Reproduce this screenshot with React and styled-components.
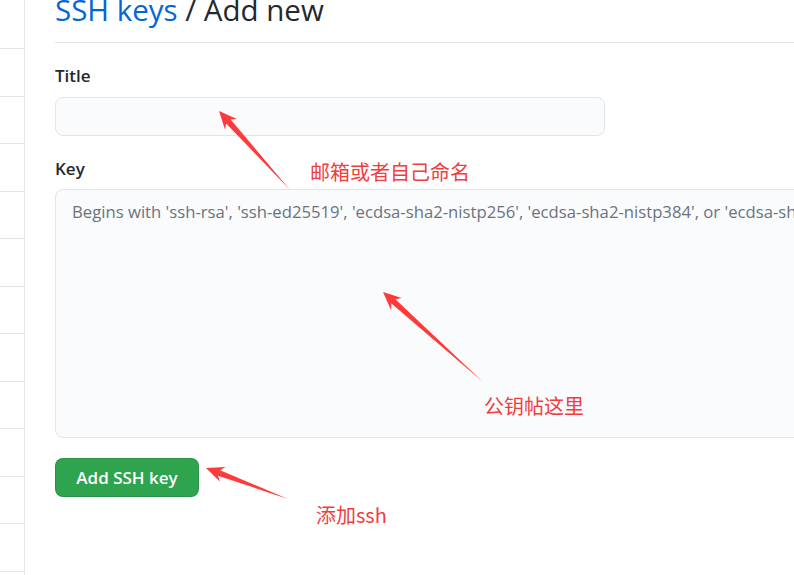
import React from "react"
import styled, { createGlobalStyle } from "styled-components"

const GlobalStyle = createGlobalStyle`
  html, body {
    margin: 0;
    padding: 0;
    background: #fff;
    overflow: hidden;
  }
  body {
    font-family: "Open Sans", "Noto Sans CJK SC", sans-serif;
    color: #24292e;
  }
`

const Page = styled.div`
  position: relative;
  display: flex;
  width: 794px;
  height: 575px;
  overflow: hidden;
`

const Sidebar = styled.ul`
  flex: 0 0 24px;
  margin: 0;
  padding: 1.5px 0 0 0;
  border-right: 1px solid #e1e4e8;
  list-style: none;
`

const SideItem = styled.li`
  height: 46.5px;
  border-bottom: 1px solid #e1e4e8;
`

const Main = styled.main`
  flex: 1;
  padding-left: 30px;
  min-width: 0;
`

const Subhead = styled.div`
  margin-top: -10px;
  padding-bottom: 12px;
  border-bottom: 1px solid #e1e4e8;
`

const Heading = styled.h2`
  margin: 0;
  font-size: 29.5px;
  line-height: 40px;
  font-weight: 400;
  color: #24292e;
  white-space: nowrap;
  a {
    color: #0366d6;
    text-decoration: none;
  }
`

const FormGroup = styled.div`
  margin-top: ${p => p.$top}px;
`

const Label = styled.label`
  display: block;
  font-size: 17px;
  font-weight: 600;
  line-height: 24px;
  margin-bottom: ${p => p.$gap}px;
`

const Input = styled.input`
  display: block;
  box-sizing: border-box;
  width: 550px;
  height: 39px;
  padding: 6px 16px;
  background: #fafbfc;
  border: 1px solid #e1e4e8;
  border-radius: 8px;
  font-family: inherit;
  font-size: 17px;
  outline: none;
`

const TextArea = styled.textarea`
  display: block;
  box-sizing: border-box;
  width: 960px;
  height: 249px;
  padding: 8px 16px;
  background: #fafbfc;
  border: 1px solid #e1e4e8;
  border-radius: 8px;
  font-family: "Open Sans", sans-serif;
  font-size: 16.7px;
  line-height: 27px;
  resize: none;
  outline: none;
  &::placeholder {
    color: #6a737d;
  }
`

const Button = styled.button`
  display: block;
  margin-top: 20px;
  box-sizing: border-box;
  width: 144px;
  height: 39px;
  padding: 0;
  background: #2ea44f;
  border: 1px solid rgba(27, 31, 35, 0.15);
  border-radius: 8px;
  color: #fff;
  font-family: "Open Sans", sans-serif;
  font-size: 17px;
  font-weight: 600;
  cursor: pointer;
`

const Overlay = styled.svg`
  position: absolute;
  left: 0;
  top: 0;
  pointer-events: none;
`

const Note = styled.span`
  position: absolute;
  left: ${p => p.$x}px;
  top: ${p => p.$y}px;
  font-family: "Noto Sans CJK SC", "Open Sans", sans-serif;
  font-size: 20px;
  line-height: 24px;
  color: #f23d3d;
  white-space: nowrap;
`

const RED = "#ff3a3a"

const Arrow = ({ tip, tail }) => {
  const dx = tail[0] - tip[0]
  const dy = tail[1] - tip[1]
  const len = Math.hypot(dx, dy)
  const u = [dx / len, dy / len]
  const n = [-u[1], u[0]]
  const L = 18
  const W = 8
  const w = 3
  const at = (d, s) => [tip[0] + u[0] * d + n[0] * s, tip[1] + u[1] * d + n[1] * s]
  const pts = [tip, at(L, W), at(L - 4, w), tail, at(L - 4, -w), at(L, -W)]
  return <polygon points={pts.map(p => p.join(",")).join(" ")} fill={RED} />
}

const arrows = [
  { tip: [219, 111], tail: [290, 190] },
  { tip: [383, 292], tail: [483, 382] },
  { tip: [206, 468], tail: [288, 499] },
]

const notes = [
  { x: 310, y: 160, text: "邮箱或者自己命名" },
  { x: 484, y: 394, text: "公钥帖这里" },
  { x: 316, y: 503, text: "添加ssh" },
]

export default function App() {
  return (
    <Page>
      <GlobalStyle />
      <Sidebar>
        {Array.from({ length: 13 }).map((_, i) => (
          <SideItem key={i} />
        ))}
      </Sidebar>
      <Main>
        <Subhead>
          <Heading>
            <a href="#keys">SSH keys</a> / Add new
          </Heading>
        </Subhead>
        <form onSubmit={e => e.preventDefault()}>
          <FormGroup $top={21}>
            <Label htmlFor="key-title" $gap={9}>Title</Label>
            <Input id="key-title" type="text" />
          </FormGroup>
          <FormGroup $top={21}>
            <Label htmlFor="key-body" $gap={8}>Key</Label>
            <TextArea
              id="key-body"
              placeholder="Begins with 'ssh-rsa', 'ssh-ed25519', 'ecdsa-sha2-nistp256', 'ecdsa-sha2-nistp384', or 'ecdsa-sha2-nistp521'"
            />
          </FormGroup>
          <Button type="submit">Add SSH key</Button>
        </form>
      </Main>
      <Overlay width="794" height="575" viewBox="0 0 794 575">
        {arrows.map((a, i) => (
          <Arrow key={i} tip={a.tip} tail={a.tail} />
        ))}
      </Overlay>
      {notes.map(n => (
        <Note key={n.text} $x={n.x} $y={n.y}>
          {n.text}
        </Note>
      ))}
    </Page>
  )
}
